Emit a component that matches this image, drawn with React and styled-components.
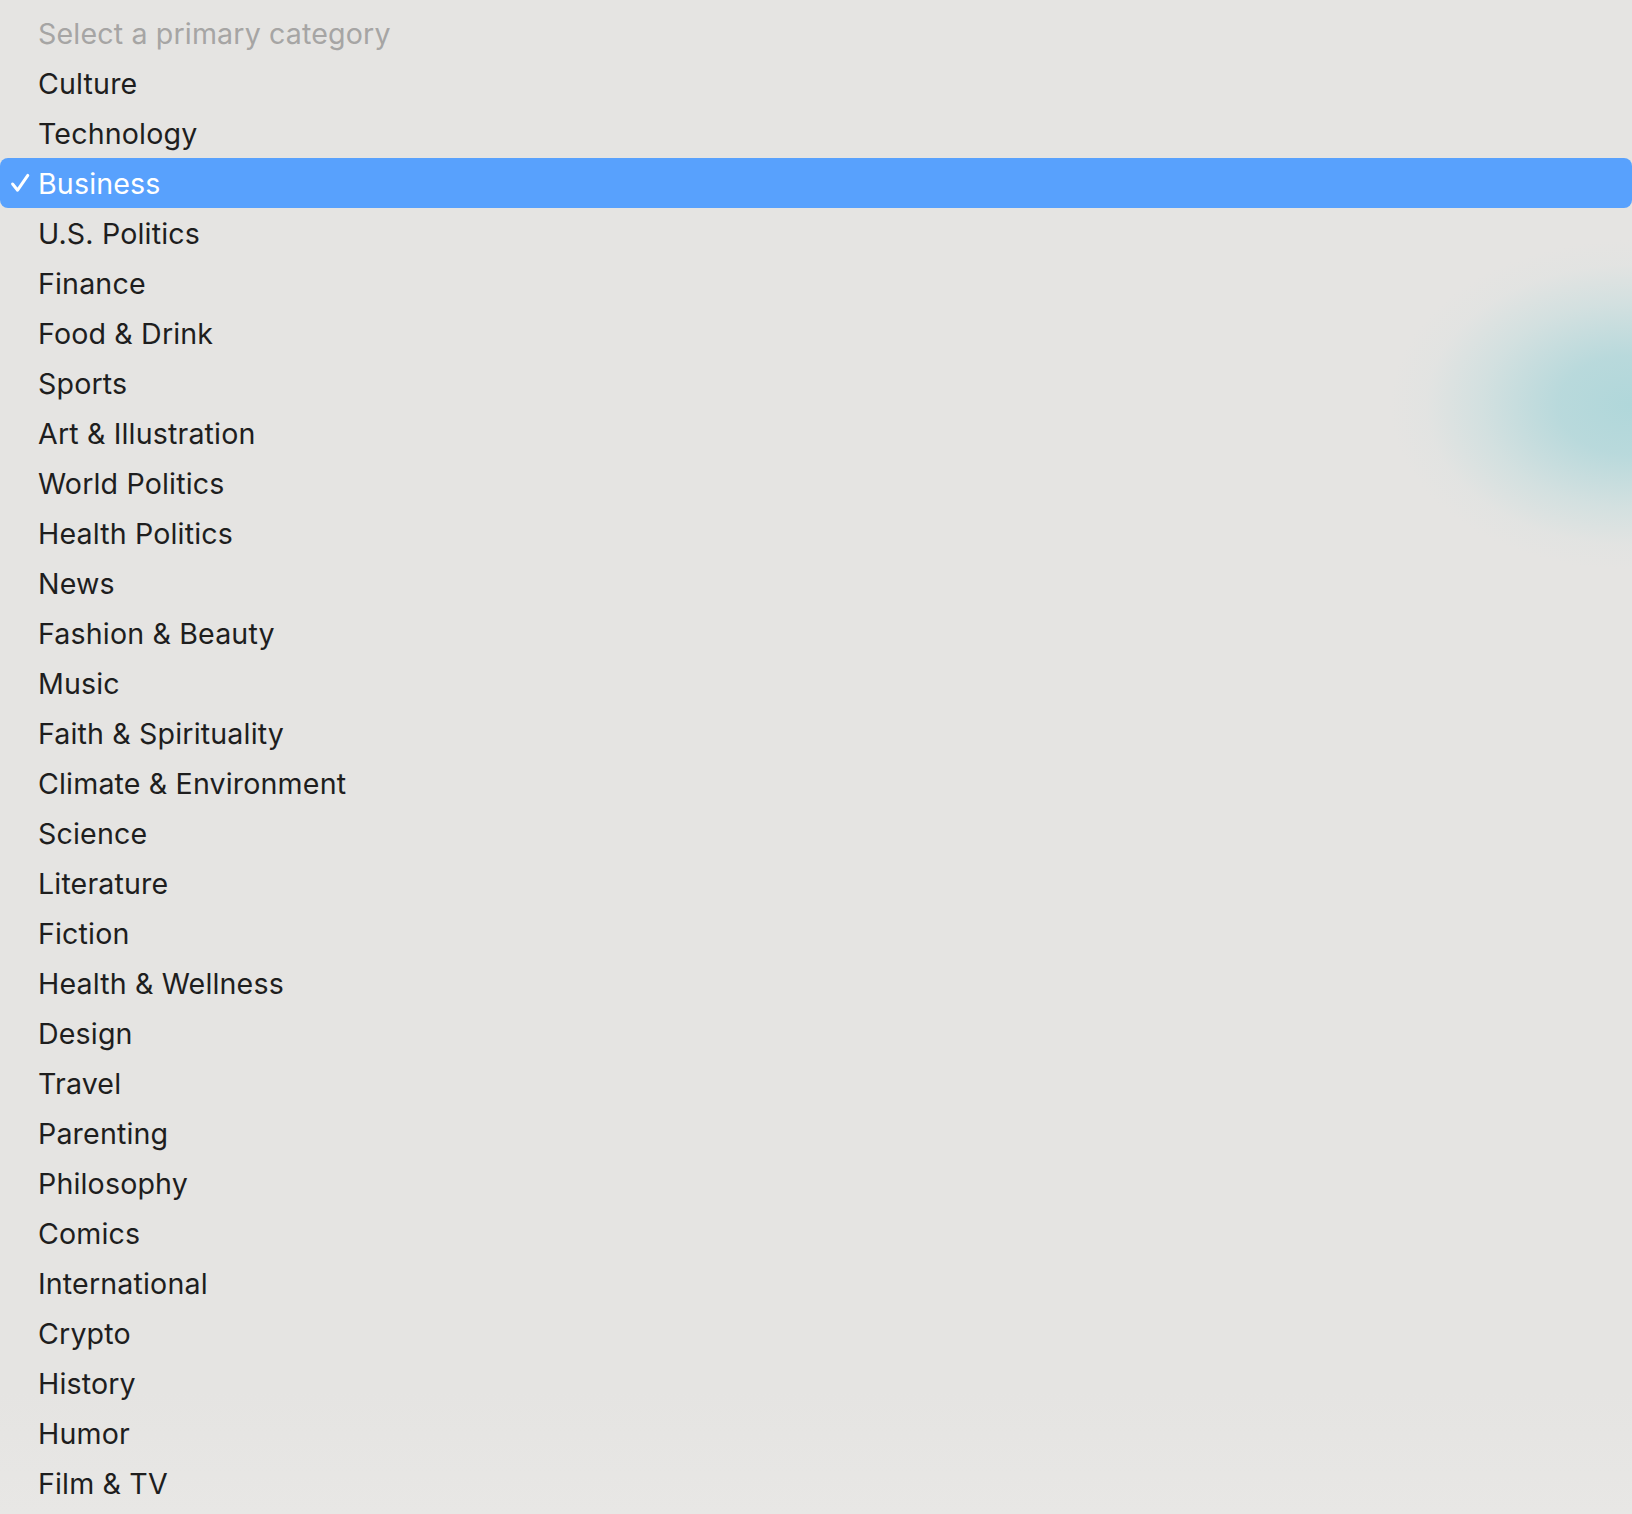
import React from 'react'
import styled, { createGlobalStyle } from 'styled-components'

const GlobalStyle = createGlobalStyle`
    html, body {
        margin: 0;
        padding: 0;
    }
    body {
        background-color: #e5e4e2;
        font-family: Inter, "Noto Sans", "Liberation Sans", sans-serif;
    }
`

const Page = styled.div`
    width: 1632px;
    height: 1514px;
    overflow: hidden;
    background:
        radial-gradient(ellipse 240px 165px at 1630px 405px, rgba(176, 215, 218, 1) 0%, rgba(180, 216, 219, 0.9) 30%, rgba(196, 221, 222, 0.55) 62%, rgba(215, 225, 225, 0.2) 85%, rgba(229, 228, 226, 0) 100%),
        linear-gradient(to bottom, #e5e4e2 0%, #e5e4e2 92%, #e8e7e5 100%);
`

const List = styled.ul`
    list-style: none;
    margin: 0;
    padding: 8px 0 0 0;
    display: flex;
    flex-direction: column;
`

const Option = styled.li`
    position: relative;
    display: flex;
    align-items: center;
    height: 50px;
    padding-left: 38px;
    border-radius: 8px;
    font-size: 28.6px;
    letter-spacing: 0.15px;
    color: ${p => (p.$selected ? '#ffffff' : p.$placeholder ? '#a6a5a4' : '#1e1e1e')};
    background-color: ${p => (p.$selected ? '#58a1fd' : 'transparent')};
`

const Check = styled.svg`
    position: absolute;
    left: 10px;
    top: 15px;
    width: 20px;
    height: 20px;
`

const categories = [
    'Culture', 'Technology', 'Business', 'U.S. Politics', 'Finance', 'Food & Drink',
    'Sports', 'Art & Illustration', 'World Politics', 'Health Politics', 'News',
    'Fashion & Beauty', 'Music', 'Faith & Spirituality', 'Climate & Environment',
    'Science', 'Literature', 'Fiction', 'Health & Wellness', 'Design', 'Travel',
    'Parenting', 'Philosophy', 'Comics', 'International', 'Crypto', 'History',
    'Humor', 'Film & TV',
]

export default function App() {
    const selected = 'Business'
    return (
        <Page>
            <GlobalStyle />
            <List>
                <Option $placeholder>Select a primary category</Option>
                {categories.map(c => (
                    <Option key={c} $selected={c === selected}>
                        {c === selected && (
                            <Check viewBox="0 0 20 20">
                                <path d="M2.6 11 L7.6 17.2 L17.8 2.4" fill="none" stroke="#fff" strokeWidth="3" strokeLinecap="round" strokeLinejoin="round" />
                            </Check>
                        )}
                        {c}
                    </Option>
                ))}
            </List>
        </Page>
    )
}
